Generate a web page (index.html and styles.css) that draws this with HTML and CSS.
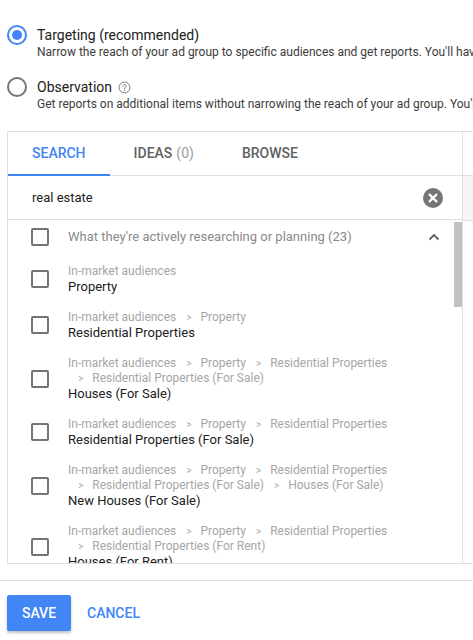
FILE: index.html
```html
<!DOCTYPE html>
<html>
<head>
<meta charset="utf-8">
<link rel="stylesheet" href="styles.css">
</head>
<body>
<div class="page">
  <div class="options">
    <div class="option">
      <span class="radio checked"></span>
      <div class="option-text">
        <div class="option-title">Targeting (recommended)</div>
        <div class="option-desc">Narrow the reach of your ad group to specific audiences and get reports. You'll have the option to adjust your bids.</div>
      </div>
    </div>
    <div class="option second">
      <span class="radio"></span>
      <div class="option-text">
        <div class="option-title">Observation
          <svg class="help" width="13" height="13" viewBox="0 0 24 24"><circle cx="12" cy="12" r="10" fill="none" stroke="#757575" stroke-width="1.8"/><path d="M9.2 9.3a2.9 2.9 0 1 1 4.3 2.6c-1 .6-1.5 1.1-1.5 2.3" fill="none" stroke="#757575" stroke-width="1.8" stroke-linecap="round"/><circle cx="12" cy="17.3" r="1.1" fill="#757575"/></svg>
        </div>
        <div class="option-desc">Get reports on additional items without narrowing the reach of your ad group. You'll have the option to adjust your bids.</div>
      </div>
    </div>
  </div>

  <div class="panel">
    <div class="main">
      <div class="tabs">
        <div class="tab active">SEARCH</div>
        <div class="tab">IDEAS <span class="count">(0)</span></div>
        <div class="tab">BROWSE</div>
      </div>
      <div class="search">
        <span class="query">real estate</span>
        <svg class="clear" width="20" height="20" viewBox="0 0 20 20"><circle cx="10" cy="10" r="10" fill="#757575"/><path d="M6.6 6.6l6.8 6.8M13.4 6.6l-6.8 6.8" stroke="#fff" stroke-width="2.2" stroke-linecap="round"/></svg>
      </div>
      <div class="list">
        <div class="row heading">
          <span class="checkbox"></span>
          <span class="heading-text">What they're actively researching or planning (23)</span>
          <svg class="chevron" width="12" height="8" viewBox="0 0 12 8"><path d="M1.5 6.5L6 2l4.5 4.5" fill="none" stroke="#616161" stroke-width="1.8"/></svg>
        </div>
        <div class="row">
          <span class="checkbox"></span>
          <div class="item">
            <div class="path"><span class="seg">In-market audiences</span></div>
            <div class="name">Property</div>
          </div>
        </div>
        <div class="row">
          <span class="checkbox"></span>
          <div class="item">
            <div class="path"><span class="seg">In-market audiences</span><span class="seg"><span class="sep">&gt;</span>Property</span></div>
            <div class="name">Residential Properties</div>
          </div>
        </div>
        <div class="row">
          <span class="checkbox"></span>
          <div class="item">
            <div class="path"><span class="seg">In-market audiences</span><span class="seg"><span class="sep">&gt;</span>Property</span><span class="seg"><span class="sep">&gt;</span>Residential Properties</span><span class="seg"><span class="sep">&gt;</span>Residential Properties (For Sale)</span></div>
            <div class="name">Houses (For Sale)</div>
          </div>
        </div>
        <div class="row">
          <span class="checkbox"></span>
          <div class="item">
            <div class="path"><span class="seg">In-market audiences</span><span class="seg"><span class="sep">&gt;</span>Property</span><span class="seg"><span class="sep">&gt;</span>Residential Properties</span></div>
            <div class="name">Residential Properties (For Sale)</div>
          </div>
        </div>
        <div class="row">
          <span class="checkbox"></span>
          <div class="item">
            <div class="path"><span class="seg">In-market audiences</span><span class="seg"><span class="sep">&gt;</span>Property</span><span class="seg"><span class="sep">&gt;</span>Residential Properties</span><span class="seg"><span class="sep">&gt;</span>Residential Properties (For Sale)</span><span class="seg"><span class="sep">&gt;</span>Houses (For Sale)</span></div>
            <div class="name">New Houses (For Sale)</div>
          </div>
        </div>
        <div class="row">
          <span class="checkbox"></span>
          <div class="item">
            <div class="path"><span class="seg">In-market audiences</span><span class="seg"><span class="sep">&gt;</span>Property</span><span class="seg"><span class="sep">&gt;</span>Residential Properties</span><span class="seg"><span class="sep">&gt;</span>Residential Properties (For Rent)</span></div>
            <div class="name">Houses (For Rent)</div>
          </div>
        </div>
        <div class="row">
          <span class="checkbox"></span>
          <div class="item">
            <div class="path"><span class="seg">In-market audiences</span><span class="seg"><span class="sep">&gt;</span>Property</span></div>
            <div class="name">Commercial Properties</div>
          </div>
        </div>
        <div class="scroll-thumb"></div>
      </div>
    </div>
    <div class="side">
      <div class="side-head"></div>
      <div class="side-bar"></div>
    </div>
  </div>

  <div class="footer">
    <button class="btn-save">SAVE</button>
    <button class="btn-cancel">CANCEL</button>
  </div>
</div>
</body>
</html>
```

FILE: styles.css
```css
html, body {
  margin: 0;
  padding: 0;
  background: #fff;
}
body {
  font-family: Roboto, "Noto Sans", Arial, sans-serif;
  color: #212121;
  width: 473px;
  height: 640px;
  overflow: hidden;
}
.page {
  width: 473px;
}
.options {
  padding: 25px 0 0 7px;
}
.option {
  display: flex;
  align-items: flex-start;
  gap: 10px;
}
.option.second {
  margin-top: 17px;
}
.radio {
  flex: none;
  width: 20px;
  height: 20px;
  box-sizing: border-box;
  border: 2px solid #757575;
  border-radius: 50%;
  position: relative;
}
.radio.checked {
  border-color: #4285f4;
}
.radio.checked::after {
  content: "";
  position: absolute;
  left: 3px;
  top: 3px;
  width: 10px;
  height: 10px;
  border-radius: 50%;
  background: #4285f4;
}
.option-text {
  min-width: 0;
  white-space: nowrap;
}
.option-title {
  font-size: 14px;
  line-height: 18px;
  margin-top: 1px;
  color: #212121;
  display: flex;
  align-items: center;
}
.help {
  margin-left: 6px;
}
.option-desc {
  font-size: 12px;
  line-height: 16px;
  color: #3c3c3c;
}
.panel {
  margin: 19px 0 0 7px;
  width: 560px;
  display: flex;
  border-top: 1px solid #e0e0e0;
  border-left: 1px solid #e0e0e0;
  border-bottom: 1px solid #e0e0e0;
}
.main {
  width: 454px;
  flex: none;
  border-right: 1px solid #e0e0e0;
}
.tabs {
  display: flex;
  height: 43px;
  border-bottom: 1px solid #e0e0e0;
}
.tab {
  height: 42px;
  padding: 0 24px;
  display: flex;
  align-items: center;
  font-size: 14px;
  font-weight: 500;
  color: #616161;
  border-bottom: 2px solid transparent;
  margin-bottom: -1px;
}
.tab.active {
  color: #4285f4;
  border-bottom-color: #4285f4;
}
.count {
  color: #9e9e9e;
  font-weight: 400;
  margin-left: 4px;
}
.search {
  height: 43px;
  border-bottom: 1px solid #e0e0e0;
  display: flex;
  align-items: center;
  padding: 0 19px 0 24px;
}
.query {
  flex: 1;
  font-size: 13px;
  color: #212121;
}
.list {
  height: 343px;
  overflow: hidden;
  position: relative;
}
.row {
  display: flex;
  align-items: center;
  padding: 8px 0 8px 23px;
}
.row.heading {
  padding: 7px 0 9px 23px;
}
.checkbox {
  flex: none;
  width: 18px;
  height: 18px;
  box-sizing: border-box;
  border: 2px solid #757575;
  border-radius: 2px;
  margin-right: 19px;
}
.heading-text {
  flex: 1;
  font-size: 13px;
  line-height: 20px;
  color: #8a8a8a;
}
.chevron {
  margin-right: 22px;
}
.item {
  width: 360px;
}
.path {
  font-size: 12px;
  line-height: 15px;
  color: #a6a6a6;
}
.seg {
  display: inline-block;
  white-space: nowrap;
}
.sep {
  display: inline-block;
  font-size: 10px;
  margin: 0 9px 0 10px;
  color: #a6a6a6;
}
.name {
  font-size: 13px;
  line-height: 15px;
  color: #212121;
}
.scroll-thumb {
  position: absolute;
  right: 0;
  top: 2px;
  width: 8px;
  height: 85px;
  background: #c1c1c1;
}
.side {
  flex: 1;
}
.side-head {
  height: 43px;
  border-bottom: 1px solid #e0e0e0;
}
.side-bar {
  height: 44px;
  background: #f5f5f5;
  border-bottom: 1px solid #e0e0e0;
}
.footer {
  margin-top: 16px;
  border-top: 1px solid #e0e0e0;
  padding: 14px 0 0 7px;
  display: flex;
  align-items: center;
}
button {
  font-family: Roboto, "Noto Sans", Arial, sans-serif;
  font-size: 14px;
  font-weight: 500;
  border: none;
  cursor: pointer;
}
.btn-save {
  width: 64px;
  height: 36px;
  padding: 0;
  border-radius: 2px;
  background: #4285f4;
  color: #fff;
  box-shadow: 0 2px 3px rgba(0, 0, 0, 0.25);
}
.btn-cancel {
  background: transparent;
  color: #4285f4;
  padding: 0 16px;
  height: 36px;
}
```
